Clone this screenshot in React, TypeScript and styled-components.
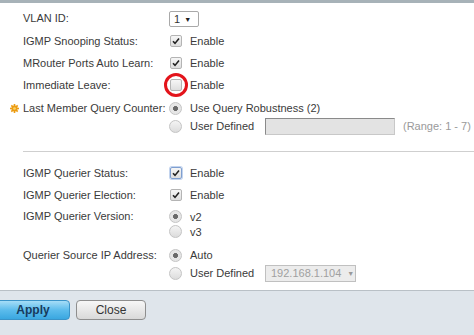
import React from "react";
import styled, { createGlobalStyle } from "styled-components";

const Global = createGlobalStyle`
  body {
    margin: 0;
    background: #fff;
    font-family: "Liberation Sans", Arial, sans-serif;
    font-size: 11px;
    color: #3a3a3a;
  }
`;

const Page = styled.div`
  width: 474px;
  height: 335px;
  overflow: hidden;
  display: flex;
  flex-direction: column;
`;

const TopBar = styled.div`
  height: 3px;
  background: #a7b2b8;
`;

const Form = styled.div`
  padding: 4px 0 0 23px;
  display: flex;
  flex-direction: column;
`;

const Row = styled.div<{ h?: number; mt?: number }>`
  display: grid;
  grid-template-columns: 146px 1fr;
  align-items: start;
  min-height: ${(p) => p.h ?? 22}px;
  margin-top: ${(p) => p.mt ?? 0}px;
  position: relative;
`;

const Label = styled.div<{ lh?: number }>`
  line-height: ${(p) => p.lh ?? 22}px;
  white-space: nowrap;
`;

const Star = styled.svg`
  position: absolute;
  left: -13px;
  top: 5px;
`;

const Options = styled.div`
  display: flex;
  flex-direction: column;
`;

const Option = styled.div<{ lh?: number }>`
  display: flex;
  align-items: center;
  height: ${(p) => p.lh ?? 22}px;
  white-space: nowrap;
`;

const OptText = styled.span<{ w?: number }>`
  margin-left: 8px;
  ${(p) => (p.w ? `width: ${p.w}px;` : "")}
`;

const Select = styled.div`
  margin-top: 4px;
  width: 24px;
  height: 14px;
  border: 1px solid #a9a9a9;
  border-radius: 2px;
  background: #fff;
  display: flex;
  align-items: center;
  padding-left: 4px;
  gap: 4px;
  font-size: 11px;
  color: #333;
`;

const Arrow = styled.span`
  font-size: 7px;
  color: #222;
`;

const Box = styled.span<{ focus?: boolean }>`
  position: relative;
  width: 10px;
  height: 10px;
  border: 1px solid ${(p) => (p.focus ? "#7f9fd0" : "#b4b4b4")};
  box-shadow: ${(p) => (p.focus ? "0 0 0 1px #c3d4ee" : "none")};
  border-radius: 2px;
  background: linear-gradient(#f6f6f6, #dedede);
  display: flex;
  align-items: center;
  justify-content: center;
  margin-left: 1px;
  flex: none;
`;

const Ring = styled.span`
  position: absolute;
  left: -7px;
  top: -7px;
  width: 18px;
  height: 18px;
  border: 3px solid #e3141b;
  border-radius: 50%;
`;

const Radio = styled.span<{ on?: boolean }>`
  width: 11px;
  height: 11px;
  border: 1px solid #c4c4c4;
  border-radius: 50%;
  background: ${(p) =>
    p.on
      ? "radial-gradient(circle, #6a6a6a 0 2.2px, #e6e6e6 2.8px)"
      : "linear-gradient(#f4f4f4, #dcdcdc)"};
  flex: none;
`;

const Field = styled.span`
  width: 128px;
  height: 15px;
  border: 1px solid #c8c8c8;
  border-top-color: #8a8a8a;
  border-left-color: #8a8a8a;
  background: #e3e3e3;
`;

const Hint = styled.span`
  margin-left: 8px;
  color: #9a9a9a;
`;

const IpSelect = styled.span`
  width: 84px;
  height: 15px;
  border: 1px solid #c0c0c0;
  background: #ececec;
  color: #a0a0a0;
  display: flex;
  align-items: center;
  padding-left: 5px;
  gap: 6px;
`;

const Separator = styled.div`
  height: 1px;
  background: #cfcfcf;
  margin: 16px 0 10px;
`;

const Footer = styled.div`
  margin-top: 8px;
  flex: 1;
  border-top: 1px solid #b9c0c6;
  background: #dfe5eb;
  display: flex;
  align-items: flex-start;
  gap: 6px;
  padding-top: 9px;
`;

const Button = styled.button<{ primary?: boolean }>`
  width: ${(p) => (p.primary ? 74 : 70)}px;
  height: 20px;
  margin-left: ${(p) => (p.primary ? -4 : 0)}px;
  border-radius: 4px;
  font-family: "Liberation Sans", Arial, sans-serif;
  font-size: 12px;
  padding: 0;
  cursor: pointer;
  ${(p) =>
    p.primary
      ? `
    border: 1px solid #3a93c8;
    background: linear-gradient(#a6ddf7, #5cbcec 50%, #3aa7e0);
    color: #173a5c;
    font-weight: bold;
  `
      : `
    border: 1px solid #8e8e8e;
    background: linear-gradient(#f7f7f7, #d9d9d9);
    color: #333;
  `}
`;

const Check = () => (
  <svg width="8" height="8" viewBox="0 0 8 8">
    <path d="M1 4.3 L3 6.4 L7 1.4" fill="none" stroke="#222" strokeWidth="1.6" />
  </svg>
);

const Gear = () => (
  <Star width="9" height="9" viewBox="0 0 10 10">
    <g fill="#ec9c12">
      {[0, 45, 90, 135].map((a) => (
        <rect key={a} x="4.1" y="0" width="1.8" height="10" transform={`rotate(${a} 5 5)`} />
      ))}
      <circle cx="5" cy="5" r="3.3" />
    </g>
    <circle cx="5" cy="5" r="1.5" fill="#f8d36a" />
  </Star>
);

export default () => {
  return (
    <Page>
      <Global />
      <TopBar />
      <Form>
        <Row h={23}>
          <Label lh={23}>VLAN ID:</Label>
          <Select>
            1 <Arrow>▼</Arrow>
          </Select>
        </Row>
        <Row>
          <Label>IGMP Snooping Status:</Label>
          <Option>
            <Box><Check /></Box>
            <OptText>Enable</OptText>
          </Option>
        </Row>
        <Row>
          <Label>MRouter Ports Auto Learn:</Label>
          <Option>
            <Box><Check /></Box>
            <OptText>Enable</OptText>
          </Option>
        </Row>
        <Row>
          <Label>Immediate Leave:</Label>
          <Option>
            <Box><Ring /></Box>
            <OptText>Enable</OptText>
          </Option>
        </Row>
        <Row mt={3}>
          <Gear />
          <Label lh={18}>Last Member Query Counter:</Label>
          <Options>
            <Option lh={18}>
              <Radio on />
              <OptText>Use Query Robustness (2)</OptText>
            </Option>
            <Option lh={18}>
              <Radio />
              <OptText w={75}>User Defined</OptText>
              <Field />
              <Hint>(Range: 1 - 7)</Hint>
            </Option>
          </Options>
        </Row>
        <Separator />
        <Row>
          <Label>IGMP Querier Status:</Label>
          <Option>
            <Box focus><Check /></Box>
            <OptText>Enable</OptText>
          </Option>
        </Row>
        <Row>
          <Label>IGMP Querier Election:</Label>
          <Option>
            <Box><Check /></Box>
            <OptText>Enable</OptText>
          </Option>
        </Row>
        <Row mt={3}>
          <Label lh={15}>IGMP Querier Version:</Label>
          <Options>
            <Option lh={15}>
              <Radio on />
              <OptText>v2</OptText>
            </Option>
            <Option lh={15}>
              <Radio />
              <OptText>v3</OptText>
            </Option>
          </Options>
        </Row>
        <Row mt={7}>
          <Label lh={18}>Querier Source IP Address:</Label>
          <Options>
            <Option lh={18}>
              <Radio on />
              <OptText>Auto</OptText>
            </Option>
            <Option lh={18}>
              <Radio />
              <OptText w={75}>User Defined</OptText>
              <IpSelect>
                192.168.1.104 <Arrow style={{ color: "#999" }}>▼</Arrow>
              </IpSelect>
            </Option>
          </Options>
        </Row>
      </Form>
      <Footer>
        <Button primary>Apply</Button>
        <Button>Close</Button>
      </Footer>
    </Page>
  );
};
